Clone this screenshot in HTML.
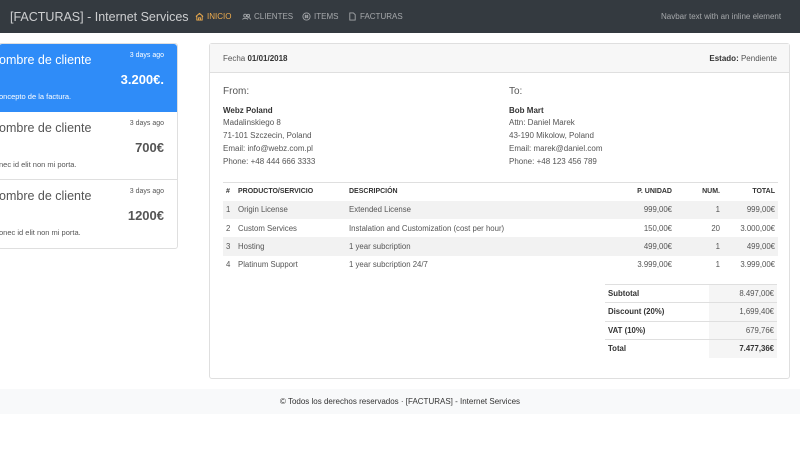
<!DOCTYPE html>
<html><head><meta charset="utf-8"><style>
*{box-sizing:border-box;margin:0;padding:0}
body{width:800px;height:450px;overflow:hidden;background:#fff;font-family:"Liberation Sans",sans-serif;color:#212529;position:relative}
.nav{position:absolute;left:0;top:0;width:800px;height:33px;background:#343a40}
.brand{position:absolute;left:10px;top:10px;font-size:12.5px;color:rgba(255,255,255,.75)}
.nl{position:absolute;top:12px;font-size:8px;color:rgba(255,255,255,.55);display:flex;align-items:center;gap:3px}
.nl svg{width:9px;height:9px}
.list{position:absolute;left:-2px;top:43px;width:180px;border:1px solid #dfdfdf;border-radius:3px}
.it{height:68px;position:relative;border-bottom:1px solid #dfdfdf;color:#555}
.it.a{background:#2f8cf8;color:#fff;border-color:#2f8cf8;border-radius:3px 3px 0 0}
.it .n{position:absolute;left:0;top:9px;font-size:12.5px}
.it .d{position:absolute;right:13px;top:8px;font-size:7px}
.it .p{position:absolute;right:13px;top:28px;font-size:13px;font-weight:bold}
.it .c{position:absolute;left:0;top:48px;font-size:7.5px}
.card{position:absolute;left:209px;top:43px;width:581px;height:336px;border:1px solid #dfdfdf;border-radius:3px;font-size:8px;color:#555}
.hd{height:29px;background:#f7f7f7;border-bottom:1px solid #dfdfdf;position:relative}
.hd span{position:absolute;top:10px}
.ab{position:absolute;font-size:8px;line-height:12.7px}
.ab h{display:block;font-size:10px;margin-bottom:6px}
table{position:absolute;border-collapse:collapse;font-size:7.8px;color:#555}
td,th{height:18.3px;padding:0 3px}
th{font-weight:bold;font-size:7px;color:#333;text-align:left}
.r{text-align:right}
.s tr:nth-child(odd) td{background:#f2f2f2}
.foot{position:absolute;left:0;top:389px;width:800px;height:25px;background:#f8f9fa;text-align:center;font-size:8px;color:#333;line-height:25px}
</style></head><body>
<div class="nav">
<div class="brand">[FACTURAS] - Internet Services</div>
<div class="nl" style="left:195px;color:#f0ad4e"><svg viewBox="0 0 10 10" fill="none" stroke="currentColor"><path d="M1 5L5 1.5 9 5M2 4.5V9h6V4.5M4 9V6.5h2V9"/></svg>INICIO</div>
<div class="nl" style="left:242px"><svg viewBox="0 0 10 10" fill="none" stroke="currentColor"><circle cx="3.5" cy="4" r="1.6"/><circle cx="7" cy="4" r="1.4"/><path d="M0.8 8.5c0-2 5.4-2 5.4 0M6 6.6c2-.6 3.4 0 3.4 1.9"/></svg>CLIENTES</div>
<div class="nl" style="left:302px"><svg viewBox="0 0 10 10" fill="none" stroke="currentColor"><circle cx="5" cy="5" r="4"/><path d="M4 3v4M6 3v4M3 4.3h4M3 5.8h4"/></svg>ITEMS</div>
<div class="nl" style="left:348px"><svg viewBox="0 0 10 10" fill="none" stroke="currentColor"><path d="M2 1h4l2 2v6H2z"/></svg>FACTURAS</div>
<div class="nl" style="left:661px;font-size:8px">Navbar text with an inline element</div>
</div>
<div class="list">
<div class="it a"><div class="n">ombre de cliente</div><div class="d">3 days ago</div><div class="p">3.200€.</div><div class="c">oncepto de la factura.</div></div>
<div class="it"><div class="n">ombre de cliente</div><div class="d">3 days ago</div><div class="p">700€</div><div class="c">nec id elit non mi porta.</div></div>
<div class="it" style="border:0"><div class="n">ombre de cliente</div><div class="d">3 days ago</div><div class="p">1200€</div><div class="c">onec id elit non mi porta.</div></div>
</div>
<div class="card">
<div class="hd"><span style="left:13px">Fecha <b style="color:#333">01/01/2018</b></span><span style="right:12px"><b style="color:#333">Estado:</b> Pendiente</span></div>
<div class="ab" style="left:13px;top:42px"><h>From:</h><b style="color:#333">Webz Poland</b><br>Madalinskiego 8<br>71-101 Szczecin, Poland<br>Email: info@webz.com.pl<br>Phone: +48 444 666 3333</div>
<div class="ab" style="left:299px;top:42px"><h>To:</h><b style="color:#333">Bob Mart</b><br>Attn: Daniel Marek<br>43-190 Mikolow, Poland<br>Email: marek@daniel.com<br>Phone: +48 123 456 789</div>
<table style="left:13px;top:138px;width:555px;border-top:1px solid #dfdfdf">
<tr><th style="width:12px">#</th><th style="width:111px">PRODUCTO/SERVICIO</th><th>DESCRIPCIÓN</th><th class="r">P. UNIDAD</th><th class="r" style="width:48px">NUM.</th><th class="r" style="width:55px">TOTAL</th></tr>
<tbody class="s">
<tr><td>1</td><td>Origin License</td><td>Extended License</td><td class="r">999,00€</td><td class="r">1</td><td class="r">999,00€</td></tr>
<tr><td>2</td><td>Custom Services</td><td>Instalation and Customization (cost per hour)</td><td class="r">150,00€</td><td class="r">20</td><td class="r">3.000,00€</td></tr>
<tr><td>3</td><td>Hosting</td><td>1 year subcription</td><td class="r">499,00€</td><td class="r">1</td><td class="r">499,00€</td></tr>
<tr><td>4</td><td>Platinum Support</td><td>1 year subcription 24/7</td><td class="r">3.999,00€</td><td class="r">1</td><td class="r">3.999,00€</td></tr>
</tbody></table>
<table style="left:395px;top:240px;width:172px">
<tr><td style="border-top:1px solid #dfdfdf;font-weight:bold;color:#333">Subtotal</td><td class="r" style="border-top:1px solid #dfdfdf;background:#f5f5f5">8.497,00€</td></tr>
<tr><td style="border-top:1px solid #dfdfdf;font-weight:bold;color:#333">Discount (20%)</td><td class="r" style="border-top:1px solid #dfdfdf;background:#f5f5f5">1,699,40€</td></tr>
<tr><td style="border-top:1px solid #dfdfdf;font-weight:bold;color:#333">VAT (10%)</td><td class="r" style="border-top:1px solid #dfdfdf;background:#f5f5f5">679,76€</td></tr>
<tr><td style="border-top:1px solid #dfdfdf;font-weight:bold;color:#333">Total</td><td class="r" style="border-top:1px solid #dfdfdf;background:#f5f5f5;font-weight:bold;color:#333">7.477,36€</td></tr>
</table>
</div>
<div class="foot">© Todos los derechos reservados · [FACTURAS] - Internet Services</div>
</body></html>
